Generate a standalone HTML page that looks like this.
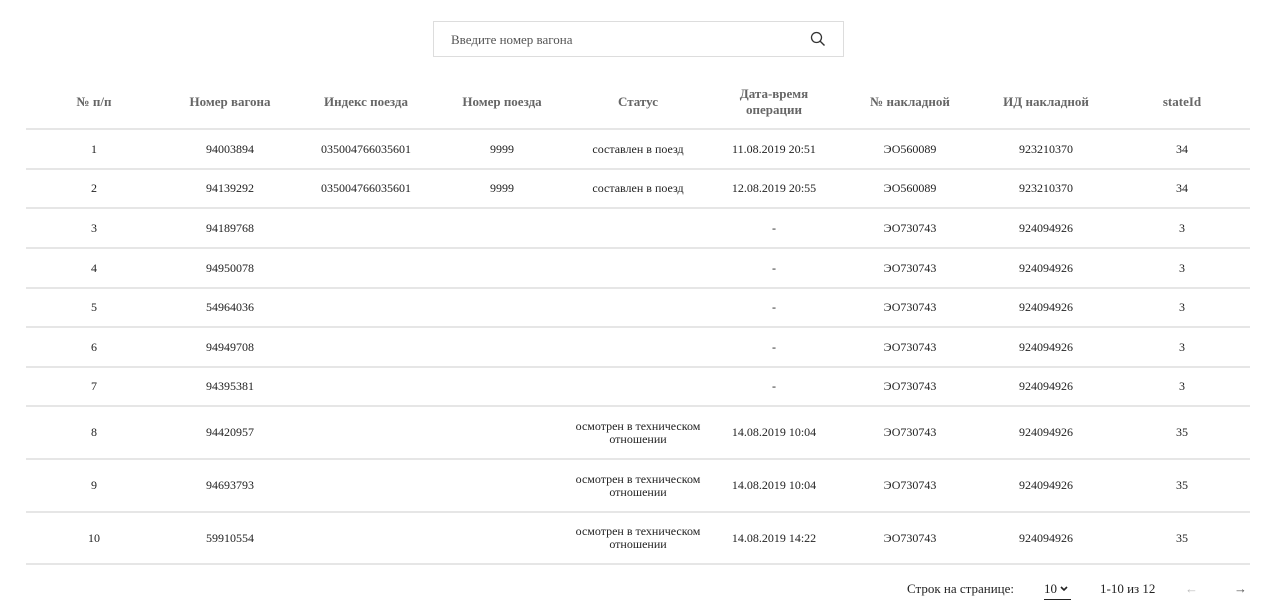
<!DOCTYPE html>
<html><head><meta charset="utf-8"><style>
body{margin:0;background:#fff;font-family:"Liberation Serif","Noto Serif CJK SC",serif;color:#222;width:1280px;height:615px;overflow:hidden;position:relative}
.search{position:absolute;left:433px;top:21px;width:411px;height:36px;border:1px solid #ddd;box-sizing:border-box}
.search span{position:absolute;left:17px;top:10px;font-size:13px;color:#555}
.search svg{position:absolute;left:376px;top:9px}
.row{position:absolute;left:26px;width:1224px;display:flex;align-items:center;border-bottom:2px solid #e6e6e6;box-sizing:border-box}
.row div{width:136px;text-align:center;font-size:12px;line-height:13px}
.hd div{font-weight:bold;color:#666;font-size:13px;line-height:16px}
.pg{position:absolute;top:581px;font-size:13px;color:#222}
</style></head><body>
<div class="search"><span>Введите номер вагона</span>
<svg width="16" height="16" viewBox="0 0 16 16"><circle cx="6.5" cy="6.5" r="5" fill="none" stroke="#333" stroke-width="1.3"/><path d="M10.2 10.2L14.5 14.5" stroke="#333" stroke-width="1.4"/></svg></div>
<div class="row hd" style="top:75px;height:55px"><div>№ п/п</div><div>Номер вагона</div><div>Индекс поезда</div><div>Номер поезда</div><div>Статус</div><div>Дата-время<br>операции</div><div>№ накладной</div><div>ИД накладной</div><div>stateId</div></div>
<div class="row" style="top:130px;height:40px"><div>1</div><div>94003894</div><div>035004766035601</div><div>9999</div><div>составлен в поезд</div><div>11.08.2019 20:51</div><div>ЭО560089</div><div>923210370</div><div>34</div></div>
<div class="row" style="top:170px;height:39px"><div>2</div><div>94139292</div><div>035004766035601</div><div>9999</div><div>составлен в поезд</div><div>12.08.2019 20:55</div><div>ЭО560089</div><div>923210370</div><div>34</div></div>
<div class="row" style="top:209px;height:40px"><div>3</div><div>94189768</div><div></div><div></div><div></div><div>-</div><div>ЭО730743</div><div>924094926</div><div>3</div></div>
<div class="row" style="top:249px;height:40px"><div>4</div><div>94950078</div><div></div><div></div><div></div><div>-</div><div>ЭО730743</div><div>924094926</div><div>3</div></div>
<div class="row" style="top:289px;height:39px"><div>5</div><div>54964036</div><div></div><div></div><div></div><div>-</div><div>ЭО730743</div><div>924094926</div><div>3</div></div>
<div class="row" style="top:328px;height:40px"><div>6</div><div>94949708</div><div></div><div></div><div></div><div>-</div><div>ЭО730743</div><div>924094926</div><div>3</div></div>
<div class="row" style="top:368px;height:39px"><div>7</div><div>94395381</div><div></div><div></div><div></div><div>-</div><div>ЭО730743</div><div>924094926</div><div>3</div></div>
<div class="row" style="top:407px;height:53px"><div>8</div><div>94420957</div><div></div><div></div><div>осмотрен в техническом отношении</div><div>14.08.2019 10:04</div><div>ЭО730743</div><div>924094926</div><div>35</div></div>
<div class="row" style="top:460px;height:53px"><div>9</div><div>94693793</div><div></div><div></div><div>осмотрен в техническом отношении</div><div>14.08.2019 10:04</div><div>ЭО730743</div><div>924094926</div><div>35</div></div>
<div class="row" style="top:513px;height:52px"><div>10</div><div>59910554</div><div></div><div></div><div>осмотрен в техническом отношении</div><div>14.08.2019 14:22</div><div>ЭО730743</div><div>924094926</div><div>35</div></div>
<div class="pg" style="left:907px">Строк на странице:</div>
<div class="pg" style="left:1044px;width:27px;border-bottom:1px solid #222;padding-bottom:2px">10 <svg width="8" height="6" viewBox="0 0 8 6" style="vertical-align:1px"><path d="M1 1L4 4L7 1" fill="none" stroke="#222" stroke-width="1.6"/></svg></div>
<div class="pg" style="left:1100px">1-10 из 12</div>
<div class="pg" style="left:1185px;color:#bbb">&larr;</div>
<div class="pg" style="left:1234px;color:#555">&rarr;</div>
</body></html>
